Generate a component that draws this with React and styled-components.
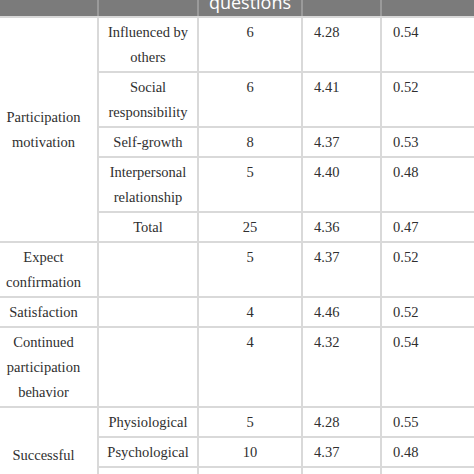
import React from "react";
import styled, { createGlobalStyle } from "styled-components";

const Global = createGlobalStyle`
  html, body { margin: 0; padding: 0; background: #fff; }
  body { overflow: hidden; }
`;

const Frame = styled.div`
  width: 474px;
  height: 474px;
  overflow: hidden;
  background: #fff;
`;

const Table = styled.table`
  border-collapse: collapse;
  table-layout: fixed;
  width: 500px;
  margin-top: -34px;
  margin-left: -10px;
  font-family: "Liberation Serif", "Times New Roman", serif;
  font-size: 14.5px;
  color: #2f2f2f;
`;

const HeadCell = styled.th`
  background: #7b7b7b;
  color: #fff;
  font-family: "Open Sans", "Noto Sans", sans-serif;
  font-weight: 400;
  font-size: 18px;
  line-height: 24px;
  padding: 0 4px 2px;
  text-align: center;
  vertical-align: middle;
  border-left: 2px solid #9a9a9a;
  border-bottom: 2px solid #d8d8d8;
  &:first-child { border-left: none; }
`;

const Cell = styled.td`
  border: 2px solid #d9d9d9;
  line-height: 25px;
  padding: 2px 4px 1px ${(p) => (p.$left ? "11px" : "4px")};
  text-align: ${(p) => (p.$left ? "left" : "center")};
  vertical-align: ${(p) => (p.$middle ? "middle" : "top")};
`;

const GroupCell = styled(Cell)`
  border-left: none;
`;

const groups = [
  {
    name: ["Participation motivation"],
    rows: [
      ["Influenced by others", "6", "4.28", "0.54"],
      ["Social responsibility", "6", "4.41", "0.52"],
      ["Self-growth", "8", "4.37", "0.53"],
      ["Interpersonal relationship", "5", "4.40", "0.48"],
      ["Total", "25", "4.36", "0.47"],
    ],
  },
  { name: ["Expect confirmation"], rows: [["", "5", "4.37", "0.52"]] },
  { name: ["Satisfaction"], rows: [["", "4", "4.46", "0.52"]] },
  { name: ["Continued participation behavior"], rows: [["", "4", "4.32", "0.54"]] },
  {
    name: ["Successful", "aging"],
    rows: [
      ["Physiological", "5", "4.28", "0.55"],
      ["Psychological", "10", "4.37", "0.48"],
      ["Social", "6", "4.30", "0.51"],
      ["Total", "21", "4.32", "0.46"],
    ],
  },
];

export default function App() {
  return (
    <Frame>
      <Global />
      <Table>
        <colgroup>
          <col style={{ width: 108 }} />
          <col style={{ width: 100 }} />
          <col style={{ width: 104 }} />
          <col style={{ width: 79 }} />
          <col style={{ width: 109 }} />
        </colgroup>
        <thead>
          <tr>
            <HeadCell>Variable</HeadCell>
            <HeadCell>Dimension</HeadCell>
            <HeadCell>Number of questions</HeadCell>
            <HeadCell>M</HeadCell>
            <HeadCell>SD</HeadCell>
          </tr>
        </thead>
        <tbody>
          {groups.map((g) =>
            g.rows.map((r, i) => (
              <tr key={g.name[0] + i}>
                {i === 0 && (
                  <GroupCell $middle rowSpan={g.rows.length}>
                    {g.name.map((part, k) => (
                      <React.Fragment key={k}>
                        {k > 0 && <br />}
                        {part}
                      </React.Fragment>
                    ))}
                  </GroupCell>
                )}
                <Cell>{r[0]}</Cell>
                <Cell>{r[1]}</Cell>
                <Cell $left>{r[2]}</Cell>
                <Cell $left>{r[3]}</Cell>
              </tr>
            ))
          )}
        </tbody>
      </Table>
    </Frame>
  );
}
